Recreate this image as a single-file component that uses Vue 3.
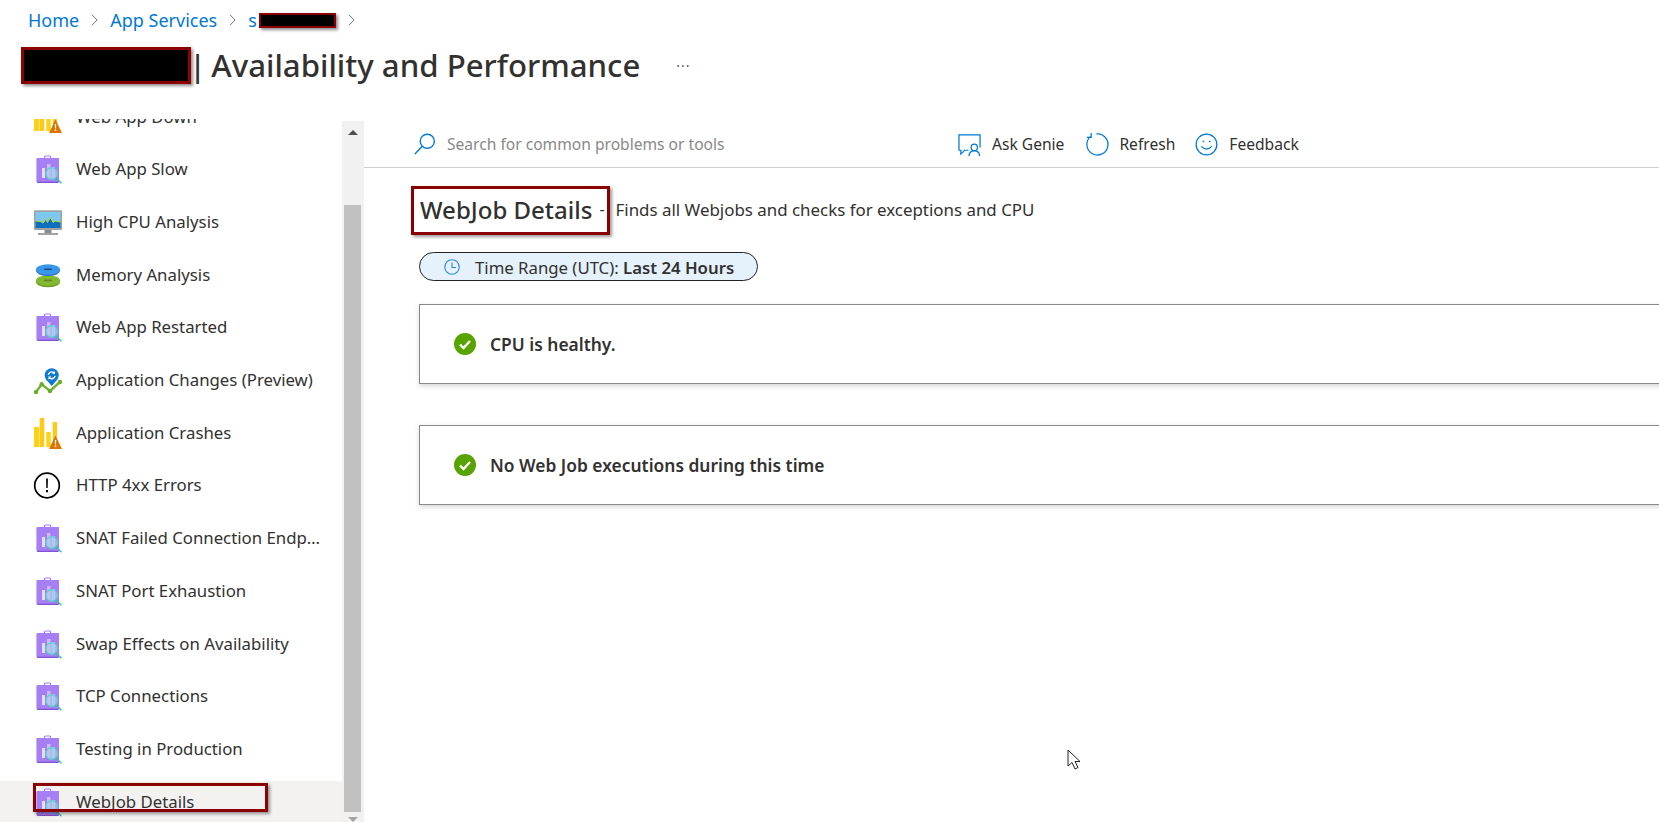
<script setup>
const items = [
  { label: 'Web App Down', icon: 'bars' },
  { label: 'Web App Slow', icon: 'clip' },
  { label: 'High CPU Analysis', icon: 'cpu' },
  { label: 'Memory Analysis', icon: 'mem' },
  { label: 'Web App Restarted', icon: 'clip' },
  { label: 'Application Changes (Preview)', icon: 'chg' },
  { label: 'Application Crashes', icon: 'bars' },
  { label: 'HTTP 4xx Errors', icon: 'info' },
  { label: 'SNAT Failed Connection Endpoint', icon: 'clip' },
  { label: 'SNAT Port Exhaustion', icon: 'clip' },
  { label: 'Swap Effects on Availability', icon: 'clip' },
  { label: 'TCP Connections', icon: 'clip' },
  { label: 'Testing in Production', icon: 'clip' },
  { label: 'WebJob Details', icon: 'clip', selected: true }
]
const insights = ['CPU is healthy.', 'No Web Job executions during this time']
</script>

<template>
  <div class="page">
    <header class="head">
      <nav class="crumbs">
        <a>Home</a>
        <svg class="chev" viewBox="0 0 8 14"><path d="M1 1l6 6-6 6" /></svg>
        <a>App Services</a>
        <svg class="chev" viewBox="0 0 8 14"><path d="M1 1l6 6-6 6" /></svg>
        <a class="crumb-app">s<span class="redact redact-small"></span></a>
        <svg class="chev" viewBox="0 0 8 14"><path d="M1 1l6 6-6 6" /></svg>
      </nav>
      <div class="title-row">
        <span class="redact redact-title"></span>
        <h1><span class="bar">|</span> Availability and Performance</h1>
        <span class="more">···</span>
      </div>
    </header>

    <div class="body">
      <aside class="side">
        <ul class="list">
          <li v-for="item in items" :key="item.label" class="row" :class="{ selected: item.selected }">
            <svg class="ico" viewBox="0 0 30 30">
              <g v-if="item.icon === 'clip'">
                <path d="M11.500 3.500V2.300q0-1.300 1.300-1.300h3.600q1.300 0 1.300 1.300v1.200" fill="none" stroke="#a67af4" stroke-width="1.200" />
                <rect x="3.700" y="3" width="22.300" height="25" rx="1.200" fill="#7f52cf" />
                <rect x="3.700" y="3" width="22.300" height="23.800" rx="1" fill="#a67ff5" />
                <rect x="9" y="13" width="3" height="10" fill="#e6dbfc" />
                <rect x="14" y="9" width="3.500" height="14" fill="#cdb8f8" />
                <rect x="19" y="12" width="3" height="11" fill="#cdb8f8" />
                <circle cx="18.700" cy="18.500" r="5.800" fill="#a9cfe9" fill-opacity=".7" stroke="#4fd8c4" stroke-width="1.200" />
                <path d="M22.800 22.700l5.700 5.600" stroke="#35c2b0" stroke-width="1.500" />
              </g>
              <g v-else-if="item.icon === 'bars'">
                <rect x="1" y="8" width="5.300" height="20" fill="#fcd116" />
                <rect x="6.700" y="-1" width="4.600" height="29" fill="#ffc91a" />
                <rect x="13.300" y="13" width="4.400" height="15" fill="#fcd116" />
                <rect x="19.700" y="3" width="4.300" height="20" fill="#ffc91a" />
                <path d="M22.500 16.500L29 30H16z" fill="#db7500" />
                <path d="M21.800 21h1.400l-.2 4.500h-1zM21.700 26.500h1.600v1.600h-1.600z" fill="#fff" />
              </g>
              <g v-else-if="item.icon === 'cpu'">
                <rect x="1" y="2.300" width="28" height="19.700" rx="1" fill="#a0a1a2" />
                <rect x="2.500" y="4" width="25" height="16" fill="#7cc8ee" />
                <path d="M2.500 13l5 .5 2.500 1.500 3-3.500 1.500 3 3-5 2.500 5 2-1.500 5.500 1V20h-25z" fill="#0c6fc0" />
                <path d="M2.500 13l5 .5 2.500 1.500 3-3.500 1.500 3 3-5 2.500 5 2-1.500 5.500 1" fill="none" stroke="#bcd62d" stroke-width="1" />
                <rect x="11.500" y="22" width="7" height="3.300" fill="#8b8c8d" />
                <rect x="5" y="25" width="20" height="2" fill="#a0a1a2" />
              </g>
              <g v-else-if="item.icon === 'mem'">
                <ellipse cx="15" cy="21" rx="12" ry="5.300" fill="#6e9f24" />
                <ellipse cx="15" cy="19.500" rx="12" ry="5.300" fill="#86b82f" />
                <rect x="11" y="18.500" width="8" height="1.800" rx=".9" fill="#5a8a1e" />
                <ellipse cx="15" cy="9.500" rx="12" ry="5.500" fill="#1d6fc4" />
                <ellipse cx="15" cy="8.500" rx="12" ry="5.300" fill="#3a97e8" />
                <rect x="11" y="7.500" width="8" height="1.600" rx=".8" fill="#0f4d8c" />
              </g>
              <g v-else-if="item.icon === 'chg'">
                <path d="M3 26l5.700-7.700 8.300 6.700 10-9" fill="none" stroke="#73b330" stroke-width="2.400" />
                <circle cx="3" cy="26" r="2.200" fill="#6aad2b" />
                <circle cx="8.700" cy="18.300" r="2.200" fill="#6aad2b" />
                <circle cx="17" cy="25" r="2.200" fill="#6aad2b" />
                <circle cx="27" cy="16" r="2.200" fill="#6aad2b" />
                <path d="M18.700 20l-6-7h12z" fill="#0f7ad1" />
                <circle cx="18.700" cy="9.300" r="7" fill="#0f7ad1" />
                <path d="M15.300 8.800a3.500 3.500 0 0 1 5.900-1.900M22.100 9.800a3.500 3.500 0 0 1-5.900 1.900" fill="none" stroke="#fff" stroke-width="1.400" />
                <path d="M22 5v3h-3zM15.400 13.600v-3h3z" fill="#fff" />
              </g>
              <g v-else>
                <circle cx="14" cy="14.500" r="12.300" fill="none" stroke="#000" stroke-width="1.700" />
                <path d="M13.100 7.500h1.800l-.2 9.500h-1.400zM13 19h2v2.200h-2z" fill="#000" />
              </g>
            </svg>
            <span class="label">{{ item.label }}</span>
          </li>
        </ul>
        <span class="redact-outline redact-row"></span>
      </aside>

      <div class="scroll">
        <div class="arrow-box"><span class="tri-up"></span></div>
        <div class="thumb"></div>
        <div class="arrow-end"><span class="tri-down"></span></div>
      </div>

      <main class="main">
        <div class="toolbar">
          <div class="search">
            <svg class="search-ico" viewBox="0 0 24 24"><circle cx="14.500" cy="9" r="7.700" /><path d="M9 14.500L1 23" /></svg>
            <span class="placeholder">Search for common problems or tools</span>
          </div>
          <button class="tool tool-genie">
            <svg viewBox="0 0 24 24"><path d="M11 18H7l-4 4v-4H1V2h22v13" /><circle cx="17" cy="15" r="3.300" /><path d="M11.500 24q0-5 5.500-5.500q5.500.5 5.500 5.500" /></svg>
            Ask Genie
          </button>
          <button class="tool tool-refresh">
            <svg viewBox="0 0 24 24"><path d="M7 3.500A11 11 0 1 0 13 1" /><path d="M7.500 0v4.500H3" /></svg>
            Refresh
          </button>
          <button class="tool tool-feedback">
            <svg viewBox="0 0 24 24"><circle cx="12" cy="12" r="10.800" /><path d="M6.500 14q5.500 5.500 11 0" /><path class="eye" d="M8 8h1.600v1.600H8zM14.500 8h1.600v1.600h-1.600z" /></svg>
            Feedback
          </button>
        </div>

        <section class="content">
          <div class="detector">
            <h2>WebJob Details</h2>
            <span class="dash">-</span>
            <span class="desc">Finds all Webjobs and checks for exceptions and CPU</span>
            <span class="redact-outline redact-h2"></span>
          </div>
          <div class="pill">
            <svg viewBox="0 0 16 16"><circle cx="8" cy="8" r="7.200" /><path d="M8 3.500V8.500H12" /></svg>
            <span>Time Range (UTC): <b>Last 24 Hours</b></span>
          </div>
          <article v-for="text in insights" :key="text" class="card">
            <svg viewBox="0 0 22 22"><circle cx="11" cy="11" r="11" fill="#57a300" /><path d="M6 11.500l3.500 3.500L16 8" fill="none" stroke="#fff" stroke-width="2.400" /></svg>
            <strong>{{ text }}</strong>
          </article>
        </section>

        <svg class="cursor" viewBox="0 0 14 22"><path d="M1 1v16l4-3.500 3 6.500 3-1.500-3-6h5z" fill="#fff" stroke="#222" stroke-width="1" /></svg>
      </main>
    </div>
  </div>
</template>

<style>
html, body { margin: 0; background: #fff; overflow: hidden; }
</style>

<style scoped>
.page {
  width: 1659px;
  height: 822px;
  overflow: hidden;
  display: flex;
  flex-direction: column;
  font-family: "Noto Sans", "Open Sans", sans-serif;
  color: #323130;
  background: #fff;
}
.head { height: 119px; flex: none; }
.crumbs {
  height: 40px;
  padding-left: 28px;
  display: flex;
  align-items: center;
  gap: 12px;
  font-size: 18px;
  color: #0078d4;
}
.crumbs a { white-space: nowrap; }
.chev { width: 7px; height: 14px; fill: none; stroke: #605e5c; stroke-width: 1; }
.crumb-app { display: flex; align-items: center; }
.redact { display: block; background: #000; border-style: solid; border-color: #8b0000; box-shadow: 2px 2px 3px rgba(0, 0, 0, .45); box-sizing: border-box; flex: none; }
.redact-small { width: 77px; height: 15px; border-width: 2px; margin-left: 2px; }
.title-row { display: flex; align-items: center; height: 38px; margin-top: 6px; padding-left: 21px; }
.redact-title { width: 170px; height: 37px; border-width: 3px; }
.title-row h1 { margin: 0 0 0 -2px; font-size: 31.200px; font-weight: 500; white-space: pre; line-height: 38px; }
.bar { margin-right: -3px; }
.more { margin-left: 36px; font-size: 14px; letter-spacing: 1px; color: #605e5c; }

.body { flex: 1; display: flex; min-height: 0; }
.side { width: 342px; flex: none; position: relative; overflow: hidden; }
.list { list-style: none; margin: -27.700px 0 0; padding: 0; }
.row {
  height: 52.700px;
  box-sizing: border-box;
  padding: 0 20px 0 33px;
  display: flex;
  align-items: center;
  gap: 13px;
  font-size: 16.800px;
}
.row.selected { background: linear-gradient(transparent 5px, #f3f2f1 5px); }
.ico { width: 30px; height: 30px; flex: none; overflow: visible; }
.label { white-space: nowrap; overflow: hidden; text-overflow: ellipsis; min-width: 0; margin-bottom: 3px; }
.redact-outline { position: absolute; box-sizing: border-box; border: 3px solid #8b0000; box-shadow: 2px 2px 3px rgba(0, 0, 0, .4); pointer-events: none; }
.redact-row { left: 33px; top: 664px; width: 235px; height: 29px; }

.scroll { width: 22px; flex: none; margin-top: 2px; background: #f1f1f1; display: flex; flex-direction: column; align-items: flex-start; }
.arrow-box { height: 84px; width: 100%; display: flex; justify-content: center; padding-top: 9px; box-sizing: border-box; }
.tri-up { width: 0; height: 0; border: 5px solid transparent; border-top: 0; border-bottom: 5px solid #505050; }
.thumb { width: 17px; height: 607px; margin-left: 2px; background: #c1c1c1; flex: none; }
.arrow-end { width: 100%; flex: 1; display: flex; justify-content: center; padding-top: 5px; box-sizing: border-box; }
.tri-down { width: 0; height: 0; border: 5px solid transparent; border-bottom: 0; border-top: 5px solid #a3a3a3; }

.main { flex: 1; min-width: 0; position: relative; }
.toolbar { height: 49px; padding-top: 2px; box-sizing: border-box; border-bottom: 1px solid #cfcfcf; display: flex; align-items: center; }
.search { width: 591px; flex: none; padding-left: 50px; box-sizing: border-box; display: flex; align-items: center; gap: 11px; }
.search-ico { width: 22px; height: 22px; fill: none; stroke: #0078d4; stroke-width: 1.500; flex: none; }
.placeholder { font-size: 15.600px; color: #8a8886; white-space: nowrap; }
.tool {
  border: 0; background: none; padding: 0; font: inherit; font-size: 15.600px; color: #323130;
  display: flex; align-items: center; gap: 11px; white-space: nowrap;
}
.tool svg { width: 23px; height: 23px; fill: none; stroke: #0078d4; stroke-width: 1.300; flex: none; overflow: visible; }
.tool svg .eye { fill: #0078d4; stroke: none; }
.tool-genie { margin-left: 3px; }
.tool-refresh { margin-left: 20px; gap: 12px; }
.tool-feedback { margin-left: 20px; }

.content { padding: 21px 0 0 55px; }
.detector { position: relative; display: flex; align-items: center; height: 40px; }
.detector h2 { margin: 0 0 0 1px; font-size: 24px; font-weight: 500; white-space: nowrap; }
.dash { margin-left: 7px; font-size: 16px; }
.desc { margin-left: 11px; font-size: 16.900px; white-space: nowrap; }
.redact-h2 { left: -8px; top: -3px; width: 199px; height: 49px; }
.pill {
  margin-top: 23px;
  width: 339px; height: 29px; box-sizing: border-box;
  border: 1px solid #222; border-radius: 15px; background: #e5f1fb;
  display: flex; align-items: center; padding-left: 24px; padding-top: 1px; gap: 15px; font-size: 16.750px; white-space: nowrap;
}
.pill svg { width: 16px; height: 16px; fill: none; stroke: #2b88d8; stroke-width: 1.100; flex: none; margin-bottom: 1px; }
.pill b { font-weight: 600; }
.card {
  width: 1400px; height: 80px; box-sizing: border-box;
  border: 1px solid #8a8a8a; box-shadow: 0 2px 5px rgba(0, 0, 0, .16);
  display: flex; align-items: center; padding-left: 34px; gap: 14px; font-size: 17.400px;
  background: #fff;
}
.pill + .card { margin-top: 23px; }
.card + .card { margin-top: 41px; }
.card svg { width: 22px; height: 22px; flex: none; }
.card strong { font-weight: 600; white-space: nowrap; }
.cursor { position: absolute; left: 703px; top: 630px; width: 14px; height: 22px; }
</style>
